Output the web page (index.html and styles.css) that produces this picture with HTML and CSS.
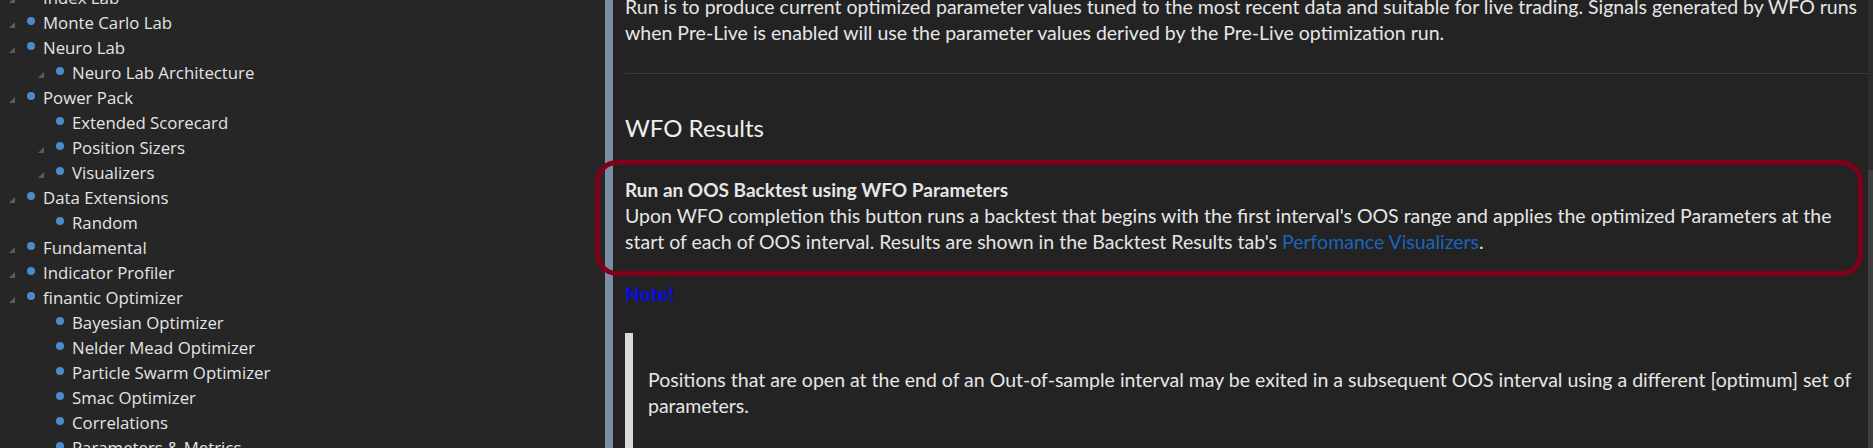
FILE: index.html
```html
<!DOCTYPE html>
<html>
<head>
<meta charset="utf-8">
<link rel="stylesheet" href="styles.css">
</head>
<body>
<div class="app">
  <nav class="sidebar">
    <ul class="tree">
      <li class="node l0"><span class="arrow"><svg viewBox="0 0 6 6" width="6" height="6"><polygon points="6,0 6,6 0,6"/></svg></span><span class="dot"></span>Index Lab</li>
      <li class="node l0"><span class="arrow"><svg viewBox="0 0 6 6" width="6" height="6"><polygon points="6,0 6,6 0,6"/></svg></span><span class="dot"></span>Monte Carlo Lab</li>
      <li class="node l0"><span class="arrow"><svg viewBox="0 0 6 6" width="6" height="6"><polygon points="6,0 6,6 0,6"/></svg></span><span class="dot"></span>Neuro Lab</li>
      <li class="node l1"><span class="arrow"><svg viewBox="0 0 6 6" width="6" height="6"><polygon points="6,0 6,6 0,6"/></svg></span><span class="dot"></span>Neuro Lab Architecture</li>
      <li class="node l0"><span class="arrow"><svg viewBox="0 0 6 6" width="6" height="6"><polygon points="6,0 6,6 0,6"/></svg></span><span class="dot"></span>Power Pack</li>
      <li class="node l1"><span class="arrow"></span><span class="dot"></span>Extended Scorecard</li>
      <li class="node l1"><span class="arrow"><svg viewBox="0 0 6 6" width="6" height="6"><polygon points="6,0 6,6 0,6"/></svg></span><span class="dot"></span>Position Sizers</li>
      <li class="node l1"><span class="arrow"><svg viewBox="0 0 6 6" width="6" height="6"><polygon points="6,0 6,6 0,6"/></svg></span><span class="dot"></span>Visualizers</li>
      <li class="node l0"><span class="arrow"><svg viewBox="0 0 6 6" width="6" height="6"><polygon points="6,0 6,6 0,6"/></svg></span><span class="dot"></span>Data Extensions</li>
      <li class="node l1"><span class="arrow"></span><span class="dot"></span>Random</li>
      <li class="node l0"><span class="arrow"><svg viewBox="0 0 6 6" width="6" height="6"><polygon points="6,0 6,6 0,6"/></svg></span><span class="dot"></span>Fundamental</li>
      <li class="node l0"><span class="arrow"><svg viewBox="0 0 6 6" width="6" height="6"><polygon points="6,0 6,6 0,6"/></svg></span><span class="dot"></span>Indicator Profiler</li>
      <li class="node l0"><span class="arrow"><svg viewBox="0 0 6 6" width="6" height="6"><polygon points="6,0 6,6 0,6"/></svg></span><span class="dot"></span>finantic Optimizer</li>
      <li class="node l1"><span class="arrow"></span><span class="dot"></span>Bayesian Optimizer</li>
      <li class="node l1"><span class="arrow"></span><span class="dot"></span>Nelder Mead Optimizer</li>
      <li class="node l1"><span class="arrow"></span><span class="dot"></span>Particle Swarm Optimizer</li>
      <li class="node l1"><span class="arrow"></span><span class="dot"></span>Smac Optimizer</li>
      <li class="node l1"><span class="arrow"></span><span class="dot"></span>Correlations</li>
      <li class="node l1"><span class="arrow"></span><span class="dot"></span>Parameters &amp; Metrics</li>
    </ul>
  </nav>
  <div class="splitter"></div>
  <main class="content">
    <div class="doc">
      <p class="intro">Run is to produce current optimized parameter values tuned to the most recent data and suitable for live trading. Signals generated by WFO runs<br>when Pre-Live is enabled will use the parameter values derived by the Pre-Live optimization run.</p>
      <hr class="rule">
      <h2 class="heading">WFO Results</h2>
      <section class="feature">
        <div class="highlight"></div>
        <p class="feature-text"><strong>Run an OOS Backtest using WFO Parameters</strong><br>Upon WFO completion this button runs a backtest that begins with the first interval's OOS range and applies the optimized Parameters at the<br>start of each of OOS interval. Results are shown in the Backtest Results tab's <a class="link" href="#">Perfomance Visualizers</a>.</p>
      </section>
      <p class="note"><a href="#">Note!</a></p>
      <blockquote class="quote">
        <p>Positions that are open at the end of an Out-of-sample interval may be exited in a subsequent OOS interval using a different [optimum] set of<br>parameters.</p>
      </blockquote>
    </div>
  </main>
  <div class="scrollbar"><div class="thumb"></div></div>
</div>
</body>
</html>
```

FILE: styles.css
```css
html, body {
  margin: 0;
  padding: 0;
  height: 100%;
  overflow: hidden;
  background: #232323;
}

.app {
  display: flex;
  height: 448px;
  overflow: hidden;
}

.sidebar {
  width: 605px;
  flex: none;
  background: #262626;
  overflow: hidden;
  font-family: "Open Sans", "Noto Sans", sans-serif;
  font-size: 16.8px;
  color: #e4e4e4;
}

.tree {
  list-style: none;
  margin: -15px 0 0 0;
  padding: 0;
}

.node {
  display: flex;
  align-items: center;
  height: 25px;
  white-space: nowrap;
}

.node.l0 { padding-left: 9px; }
.node.l1 { padding-left: 38px; }

.arrow {
  width: 6px;
  height: 6px;
  flex: none;
  display: flex;
  margin-top: 4px;
  margin-right: 12px;
}

.arrow svg { fill: #5c5c5c; display: block; }

.dot {
  width: 8px;
  height: 8px;
  border-radius: 50%;
  background: #4b8bc9;
  flex: none;
  margin-right: 8px;
  margin-top: -3px;
}

.splitter {
  width: 8px;
  flex: none;
  background: #7b8da2;
}

.content {
  flex: 1;
  min-width: 0;
  font-family: "Lato", "Liberation Sans", sans-serif;
  font-size: 19.5px;
  line-height: 26px;
  color: #e6e6e6;
}

.doc {
  padding: 0 0 0 12px;
  margin-top: -6px;
}

.intro {
  margin: 0;
  white-space: nowrap;
}

.rule {
  border: 0;
  border-top: 1px solid #383838;
  margin: 27px 0 0 0;
}

.heading {
  margin: 38px 0 0 0;
  font-size: 24px;
  line-height: 32px;
  font-weight: 400;
  color: #eeeeee;
}

.feature {
  position: relative;
  margin-top: 33px;
}

.feature-text {
  margin: 0;
  white-space: nowrap;
}

.feature-text strong {
  font-weight: 700;
  font-size: 19px;
}

.highlight {
  position: absolute;
  left: -30px;
  right: 5px;
  top: -17px;
  bottom: -21px;
  border: 5px solid #7f0018;
  border-radius: 22px;
  pointer-events: none;
}

.link {
  color: #1c64b9;
  text-decoration: none;
}

.note {
  margin: 26px 0 0 0;
  font-weight: 900;
}

.note a {
  color: #0c0ce0;
  text-decoration: none;
}

.quote {
  margin: 26px 0 0 0;
  border-left: 8px solid #d9d9d9;
  padding: 34px 0 40px 15px;
}

.quote p {
  margin: 0;
  white-space: nowrap;
}

.scrollbar {
  width: 5px;
  flex: none;
  background: #2c2c2c;
  display: flex;
  flex-direction: column;
}

.thumb {
  margin-top: 170px;
  flex: 1;
  background: #3e3e3e;
}
```
